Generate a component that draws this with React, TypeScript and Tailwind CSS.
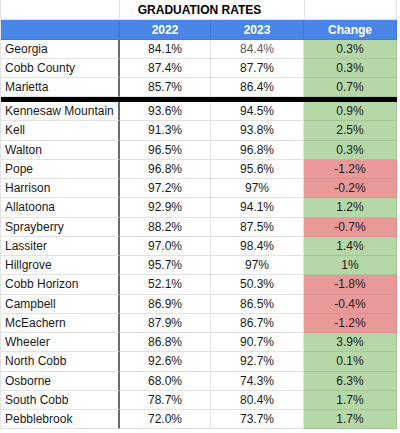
import React from 'react'

type Row = { name: string; y22: string; y23: string; change: string; dim?: boolean }

const summary: Row[] = [
  { name: 'Georgia', y22: '84.1%', y23: '84.4%', change: '0.3%', dim: true },
  { name: 'Cobb County', y22: '87.4%', y23: '87.7%', change: '0.3%' },
  { name: 'Marietta', y22: '85.7%', y23: '86.4%', change: '0.7%' },
]

const schools: Row[] = [
  { name: 'Kennesaw Mountain', y22: '93.6%', y23: '94.5%', change: '0.9%' },
  { name: 'Kell', y22: '91.3%', y23: '93.8%', change: '2.5%' },
  { name: 'Walton', y22: '96.5%', y23: '96.8%', change: '0.3%' },
  { name: 'Pope', y22: '96.8%', y23: '95.6%', change: '-1.2%' },
  { name: 'Harrison', y22: '97.2%', y23: '97%', change: '-0.2%' },
  { name: 'Allatoona', y22: '92.9%', y23: '94.1%', change: '1.2%' },
  { name: 'Sprayberry', y22: '88.2%', y23: '87.5%', change: '-0.7%' },
  { name: 'Lassiter', y22: '97.0%', y23: '98.4%', change: '1.4%' },
  { name: 'Hillgrove', y22: '95.7%', y23: '97%', change: '1%' },
  { name: 'Cobb Horizon', y22: '52.1%', y23: '50.3%', change: '-1.8%' },
  { name: 'Campbell', y22: '86.9%', y23: '86.5%', change: '-0.4%' },
  { name: 'McEachern', y22: '87.9%', y23: '86.7%', change: '-1.2%' },
  { name: 'Wheeler', y22: '86.8%', y23: '90.7%', change: '3.9%' },
  { name: 'North Cobb', y22: '92.6%', y23: '92.7%', change: '0.1%' },
  { name: 'Osborne', y22: '68.0%', y23: '74.3%', change: '6.3%' },
  { name: 'South Cobb', y22: '78.7%', y23: '80.4%', change: '1.7%' },
  { name: 'Pebblebrook', y22: '72.0%', y23: '73.7%', change: '1.7%' },
]

const grid = 'grid grid-cols-[119px_91px_93px_93px]'

const DataRow = ({ row, tall }: { row: Row; tall?: boolean }) => {
  const negative = row.change.startsWith('-')
  return (
    <div className={`${grid} ${tall ? 'h-[19.25px]' : 'h-[19px]'}`}>
      <div className="flex items-center pl-[4px] border-b border-r-2 border-b-[#e2e2e2] border-r-[#6a6a6a]">
        {row.name}
      </div>
      <div className="flex items-center justify-center border-b border-r border-[#e2e2e2]">{row.y22}</div>
      <div className={`flex items-center justify-center border-b border-r border-[#e2e2e2] ${row.dim ? 'text-[#5a5a5a]' : ''}`}>
        {row.y23}
      </div>
      <div
        className={`flex items-center justify-center border-b border-r ${
          negative ? 'bg-[#ea9999] border-[#d98f8f]' : 'bg-[#b6d7a8] border-[#a5c497]'
        }`}
      >
        {row.change}
      </div>
    </div>
  )
}

export default function App() {
  return (
    <div
      className="w-[400px] h-[433px] bg-white overflow-hidden text-[12px] text-[#1a1a1a]"
      style={{ fontFamily: '"Liberation Sans", Arial, sans-serif' }}
    >
      <div className="w-[397px] border-l border-[#e2e2e2]">
        {/* Title (overflowing text over merged middle cells) */}
        <div className={`${grid} h-[20px] font-bold text-black`}>
          <div className="border-r border-b border-[#e2e2e2]" />
          <div className="col-span-2 flex items-center justify-center pr-[25px] whitespace-nowrap border-b border-[#e2e2e2]">
            GRADUATION RATES
          </div>
          <div className="border-l border-r border-b border-[#e2e2e2]" />
        </div>

        {/* Header */}
        <div className={`${grid} h-[20px] bg-[#4a86e8] text-white font-bold`}>
          <div className="border-r-2 border-b border-[#3f78d6]" />
          <div className="flex items-center justify-center border-r border-b border-[#3f78d6]">2022</div>
          <div className="flex items-center justify-center border-r border-b border-[#3f78d6]">2023</div>
          <div className="flex items-center justify-center border-r border-b border-[#3f78d6]">Change</div>
        </div>

        {summary.map((row) => (
          <DataRow key={row.name} row={row} />
        ))}

        {/* Divider */}
        <div className="h-[5px] bg-black" />

        {schools.map((row) => (
          <DataRow key={row.name} row={row} tall />
        ))}
      </div>
    </div>
  )
}
